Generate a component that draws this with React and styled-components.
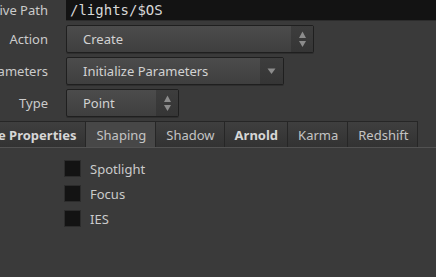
import React from 'react'
import styled, { createGlobalStyle } from 'styled-components'

const GlobalStyle = createGlobalStyle`
  html, body {
    margin: 0;
    padding: 0;
    background: #3a3a3a;
    overflow: hidden;
  }
  body {
    font-family: "Noto Sans", "Liberation Sans", sans-serif;
    font-size: 13px;
    color: #cbcbcb;
  }
`

const Page = styled.div`
  width: 436px;
  height: 277px;
  overflow: hidden;
  background: #3a3a3a;
`

const Form = styled.div`
  display: grid;
  grid-template-columns: 48px 1fr;
  column-gap: 18px;
  row-gap: 4px;
  margin-top: -6px;
`

const Label = styled.div`
  display: flex;
  justify-content: flex-end;
  align-items: center;
  white-space: nowrap;
  color: #cbcbcb;
  padding-top: ${p => p.$top || 0}px;
`

const PathField = styled.div`
  height: 27px;
  background: #131313;
  border-bottom: 1px solid #2c2c2c;
  box-sizing: border-box;
  display: flex;
  align-items: center;
  padding: 5px 0 0 4px;
  font-family: "DejaVu Sans Mono", "Liberation Mono", monospace;
  font-size: 14px;
  color: #d8d8d8;
`

const Menu = styled.div`
  width: ${p => p.$width}px;
  height: 28px;
  box-sizing: border-box;
  display: flex;
  border: 1px solid #1f1f1f;
  border-radius: 2px;
  background: linear-gradient(#4c4c4c, #3f3f3f);
  box-shadow: 0 1px 0 #2e2e2e;
  overflow: hidden;
`

const MenuText = styled.div`
  flex: 1;
  display: flex;
  align-items: center;
  padding-left: 16px;
  color: #d2d2d2;
`

const MenuArrow = styled.div`
  width: ${p => p.$width}px;
  display: flex;
  align-items: center;
  justify-content: center;
  background: linear-gradient(#3d3d3d, #353535);
`

const TabBar = styled.div`
  display: flex;
  margin-top: 4px;
  margin-left: -35px;
  border-bottom: 1px solid #525252;
`

const Tab = styled.div`
  height: 26px;
  box-sizing: border-box;
  display: flex;
  align-items: center;
  padding: 0 9px 0 10px;
  border: 1px solid #262626;
  border-left: none;
  border-bottom: none;
  font-weight: ${p => (p.$bold ? 700 : 400)};
  color: ${p => (p.$bold ? '#d6d6d6' : '#c4c4c4')};
  background: ${p => (p.$active ? '#474747' : 'linear-gradient(#3f3f3f, #323232)')};
  white-space: nowrap;
`

const Checks = styled.div`
  display: flex;
  flex-direction: column;
  gap: 8px;
  padding: 12px 0 0 64px;
`

const CheckRow = styled.div`
  display: flex;
  align-items: center;
  gap: 9px;
  height: 17px;
`

const Box = styled.div`
  width: 17px;
  height: 17px;
  box-sizing: border-box;
  background: #131313;
  border: 1px solid #2c2c2c;
`

const Spinner = () => (
  <svg width="9" height="17" viewBox="0 0 9 17">
    <polygon points="4.5,0.5 8,7 1,7" fill="#8c8c8c" />
    <polygon points="1,10 8,10 4.5,16" fill="#8c8c8c" />
  </svg>
)

const DownArrow = () => (
  <svg width="9" height="7" viewBox="0 0 9 7">
    <polygon points="0.5,0.5 8.5,0.5 4.5,6" fill="#8c8c8c" />
  </svg>
)

const tabs = [
  { name: 'Base Properties', bold: true },
  { name: 'Shaping', active: true },
  { name: 'Shadow' },
  { name: 'Arnold', bold: true },
  { name: 'Karma' },
  { name: 'Redshift' },
]

const App = () => (
  <Page>
    <GlobalStyle />
    <Form>
      <Label $top={5}>Primitive Path</Label>
      <PathField>/lights/$OS</PathField>

      <Label>Action</Label>
      <Menu $width={248}>
        <MenuText>Create</MenuText>
        <MenuArrow $width={22}><Spinner /></MenuArrow>
      </Menu>

      <Label>Parameters</Label>
      <Menu $width={218}>
        <MenuText>Initialize Parameters</MenuText>
        <MenuArrow $width={23}><DownArrow /></MenuArrow>
      </Menu>

      <Label>Type</Label>
      <Menu $width={113}>
        <MenuText>Point</MenuText>
        <MenuArrow $width={22}><Spinner /></MenuArrow>
      </Menu>
    </Form>

    <TabBar>
      {tabs.map(t => (
        <Tab key={t.name} $bold={t.bold} $active={t.active}>{t.name}</Tab>
      ))}
    </TabBar>

    <Checks>
      {['Spotlight', 'Focus', 'IES'].map(c => (
        <CheckRow key={c}>
          <Box />
          <span>{c}</span>
        </CheckRow>
      ))}
    </Checks>
  </Page>
)

export default App
